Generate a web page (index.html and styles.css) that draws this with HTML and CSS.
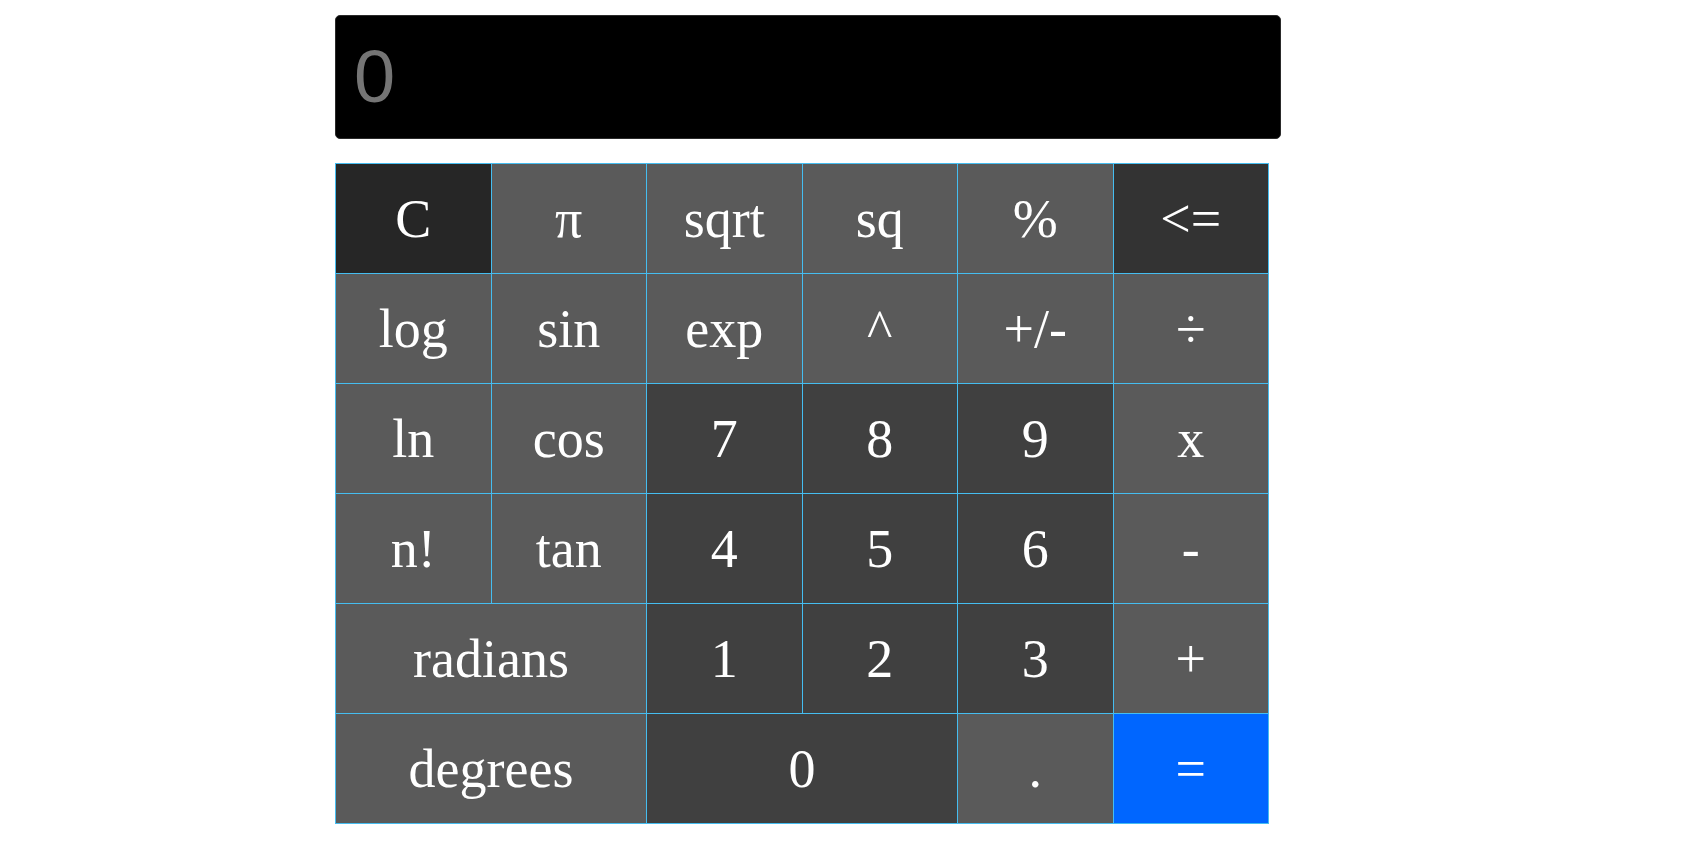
FILE: index.html
```html
<!DOCTYPE html>
<html lang="en">
<head>
    <meta charset="UTF-8">
    <meta name="viewport" content="width=device-width, initial-scale=1.0">
    <title>Calculator</title>
    <link rel="stylesheet" href="styles.css">
</head>
<body>
    <div class="calculator">
        <div class="display">0</div>

        <div class="keys">
            <button class="key clear">C</button>
            <button class="key fn">π</button>
            <button class="key fn">sqrt</button>
            <button class="key fn">sq</button>
            <button class="key fn">%</button>
            <button class="key back">&lt;=</button>

            <button class="key fn">log</button>
            <button class="key fn">sin</button>
            <button class="key fn">exp</button>
            <button class="key fn">^</button>
            <button class="key fn">+/-</button>
            <button class="key fn">÷</button>

            <button class="key fn">ln</button>
            <button class="key fn">cos</button>
            <button class="key num">7</button>
            <button class="key num">8</button>
            <button class="key num">9</button>
            <button class="key fn">x</button>

            <button class="key fn">n!</button>
            <button class="key fn">tan</button>
            <button class="key num">4</button>
            <button class="key num">5</button>
            <button class="key num">6</button>
            <button class="key fn">-</button>

            <button class="key fn wide">radians</button>
            <button class="key num">1</button>
            <button class="key num">2</button>
            <button class="key num">3</button>
            <button class="key fn">+</button>

            <button class="key fn wide">degrees</button>
            <button class="key num wide">0</button>
            <button class="key fn">.</button>
            <button class="key equals">=</button>
        </div>
    </div>
</body>
</html>
```

FILE: styles.css
```css
body {
    margin: 0;
    background-color: #fff;
}
.calculator {
    width: 946px;
    margin: 15px 0 0 335px;
}
.display {
    height: 122px;
    line-height: 122px;
    padding: 0 18px;
    background-color: #000;
    border: 1px solid #2a2a2a;
    border-radius: 5px;
    color: #757575;
    font-family: "Liberation Sans", Arial, sans-serif;
    font-size: 74px;
    margin-bottom: 24px;
}
.keys {
    width: 934px;
    box-sizing: border-box;
    display: grid;
    grid-template-columns: repeat(6, 1fr);
    grid-auto-rows: 109px;
    gap: 1px;
    padding: 1px;
    background-color: #45bdf0;
}
.key {
    border: none;
    margin: 0;
    padding: 0;
    color: #fff;
    font-family: "Liberation Serif", "Times New Roman", serif;
    font-size: 54px;
    cursor: pointer;
}
.wide {
    grid-column: span 2;
}
.fn {
    background-color: #5a5a5a;
}
.num {
    background-color: #404040;
}
.clear {
    background-color: #262626;
}
.back {
    background-color: #333;
}
.equals {
    background-color: #0066ff;
}
```
